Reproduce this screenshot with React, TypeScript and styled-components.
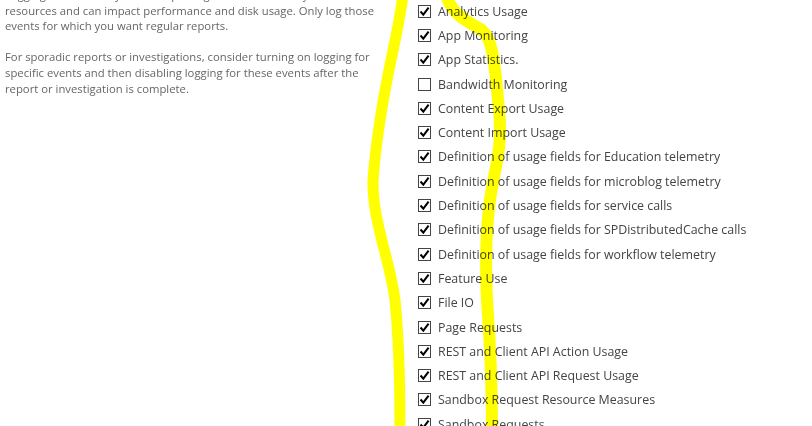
import React from "react";
import styled, { createGlobalStyle } from "styled-components";

const Global = createGlobalStyle`
  html, body {
    margin: 0;
    padding: 0;
    background: #fff;
    overflow: hidden;
  }
  body {
    font-family: "Open Sans", "Liberation Sans", sans-serif;
  }
`;

const Page = styled.div`
  position: relative;
  width: 812px;
  height: 426px;
  overflow: hidden;
  isolation: isolate;
`;

const Section = styled.div`
  display: flex;
  align-items: flex-start;
`;

const Description = styled.div`
  width: 370px;
  padding-left: 5px;
  margin-top: -13px;
  flex-shrink: 0;
`;

const Para = styled.p`
  margin: 0 0 15.6px 0;
  font-size: 11.3px;
  line-height: 15.6px;
  color: #666;
`;

const List = styled.ul`
  list-style: none;
  margin: -1px 0 0 43px;
  padding: 0;
  display: flex;
  flex-direction: column;
`;

const Row = styled.li`
  display: flex;
  align-items: center;
  height: 24.3px;
  font-size: 12.4px;
  color: #444;
  white-space: nowrap;
`;

const Box = styled.span`
  width: 11px;
  height: 11px;
  border: 1px solid #444;
  margin-right: 7px;
  display: flex;
  align-items: center;
  justify-content: center;
  background: #fff;
  flex-shrink: 0;
`;

const Scribble = styled.svg`
  position: absolute;
  left: 0;
  top: 0;
  pointer-events: none;
  mix-blend-mode: multiply;
`;

const events: [string, boolean][] = [
  ["Analytics Usage", true],
  ["App Monitoring", true],
  ["App Statistics.", true],
  ["Bandwidth Monitoring", false],
  ["Content Export Usage", true],
  ["Content Import Usage", true],
  ["Definition of usage fields for Education telemetry", true],
  ["Definition of usage fields for microblog telemetry", true],
  ["Definition of usage fields for service calls", true],
  ["Definition of usage fields for SPDistributedCache calls", true],
  ["Definition of usage fields for workflow telemetry", true],
  ["Feature Use", true],
  ["File IO", true],
  ["Page Requests", true],
  ["REST and Client API Action Usage", true],
  ["REST and Client API Request Usage", true],
  ["Sandbox Request Resource Measures", true],
  ["Sandbox Requests", true],
];

const Check: React.FC<{ on: boolean }> = ({ on }) => (
  <Box>
    {on && (
      <svg width="11" height="11" viewBox="0 0 11 11">
        <path d="M1.5 5.5 L4.3 8.6 L9.6 1.6" fill="none" stroke="#000" strokeWidth="2" />
      </svg>
    )}
  </Box>
);

export default function App() {
  return (
    <Page>
      <Global />
      <Section>
        <Description>
          <Para>
            Logging enables analysis and reporting, but it also uses system
            resources and can impact performance and disk usage. Only log those
            events for which you want regular reports.
          </Para>
          <Para>
            For sporadic reports or investigations, consider turning on logging for
            specific events and then disabling logging for these events after the
            report or investigation is complete.
          </Para>
        </Description>
        <List>
          {events.map(([label, on]) => (
            <Row key={label}>
              <Check on={on} />
              {label}
            </Row>
          ))}
        </List>
      </Section>
      <Scribble width="812" height="426" viewBox="0 0 812 426">
        <path
          d="M403 -5 C400 20 394 45 389 70 C383 100 376 140 373 180 C372 220 390 260 395 300 C399 340 400 390 400 430"
          fill="none"
          stroke="#ffff00"
          strokeWidth="11"
          strokeLinecap="round"
        />
        <path
          d="M446 -5 C452 15 468 22 482 30 C494 40 495 70 499 110 C503 150 494 170 490 200 C486 230 485 260 487 300 C490 340 492 390 492 430"
          fill="none"
          stroke="#ffff00"
          strokeWidth="12"
          strokeLinecap="round"
        />
      </Scribble>
    </Page>
  );
}
